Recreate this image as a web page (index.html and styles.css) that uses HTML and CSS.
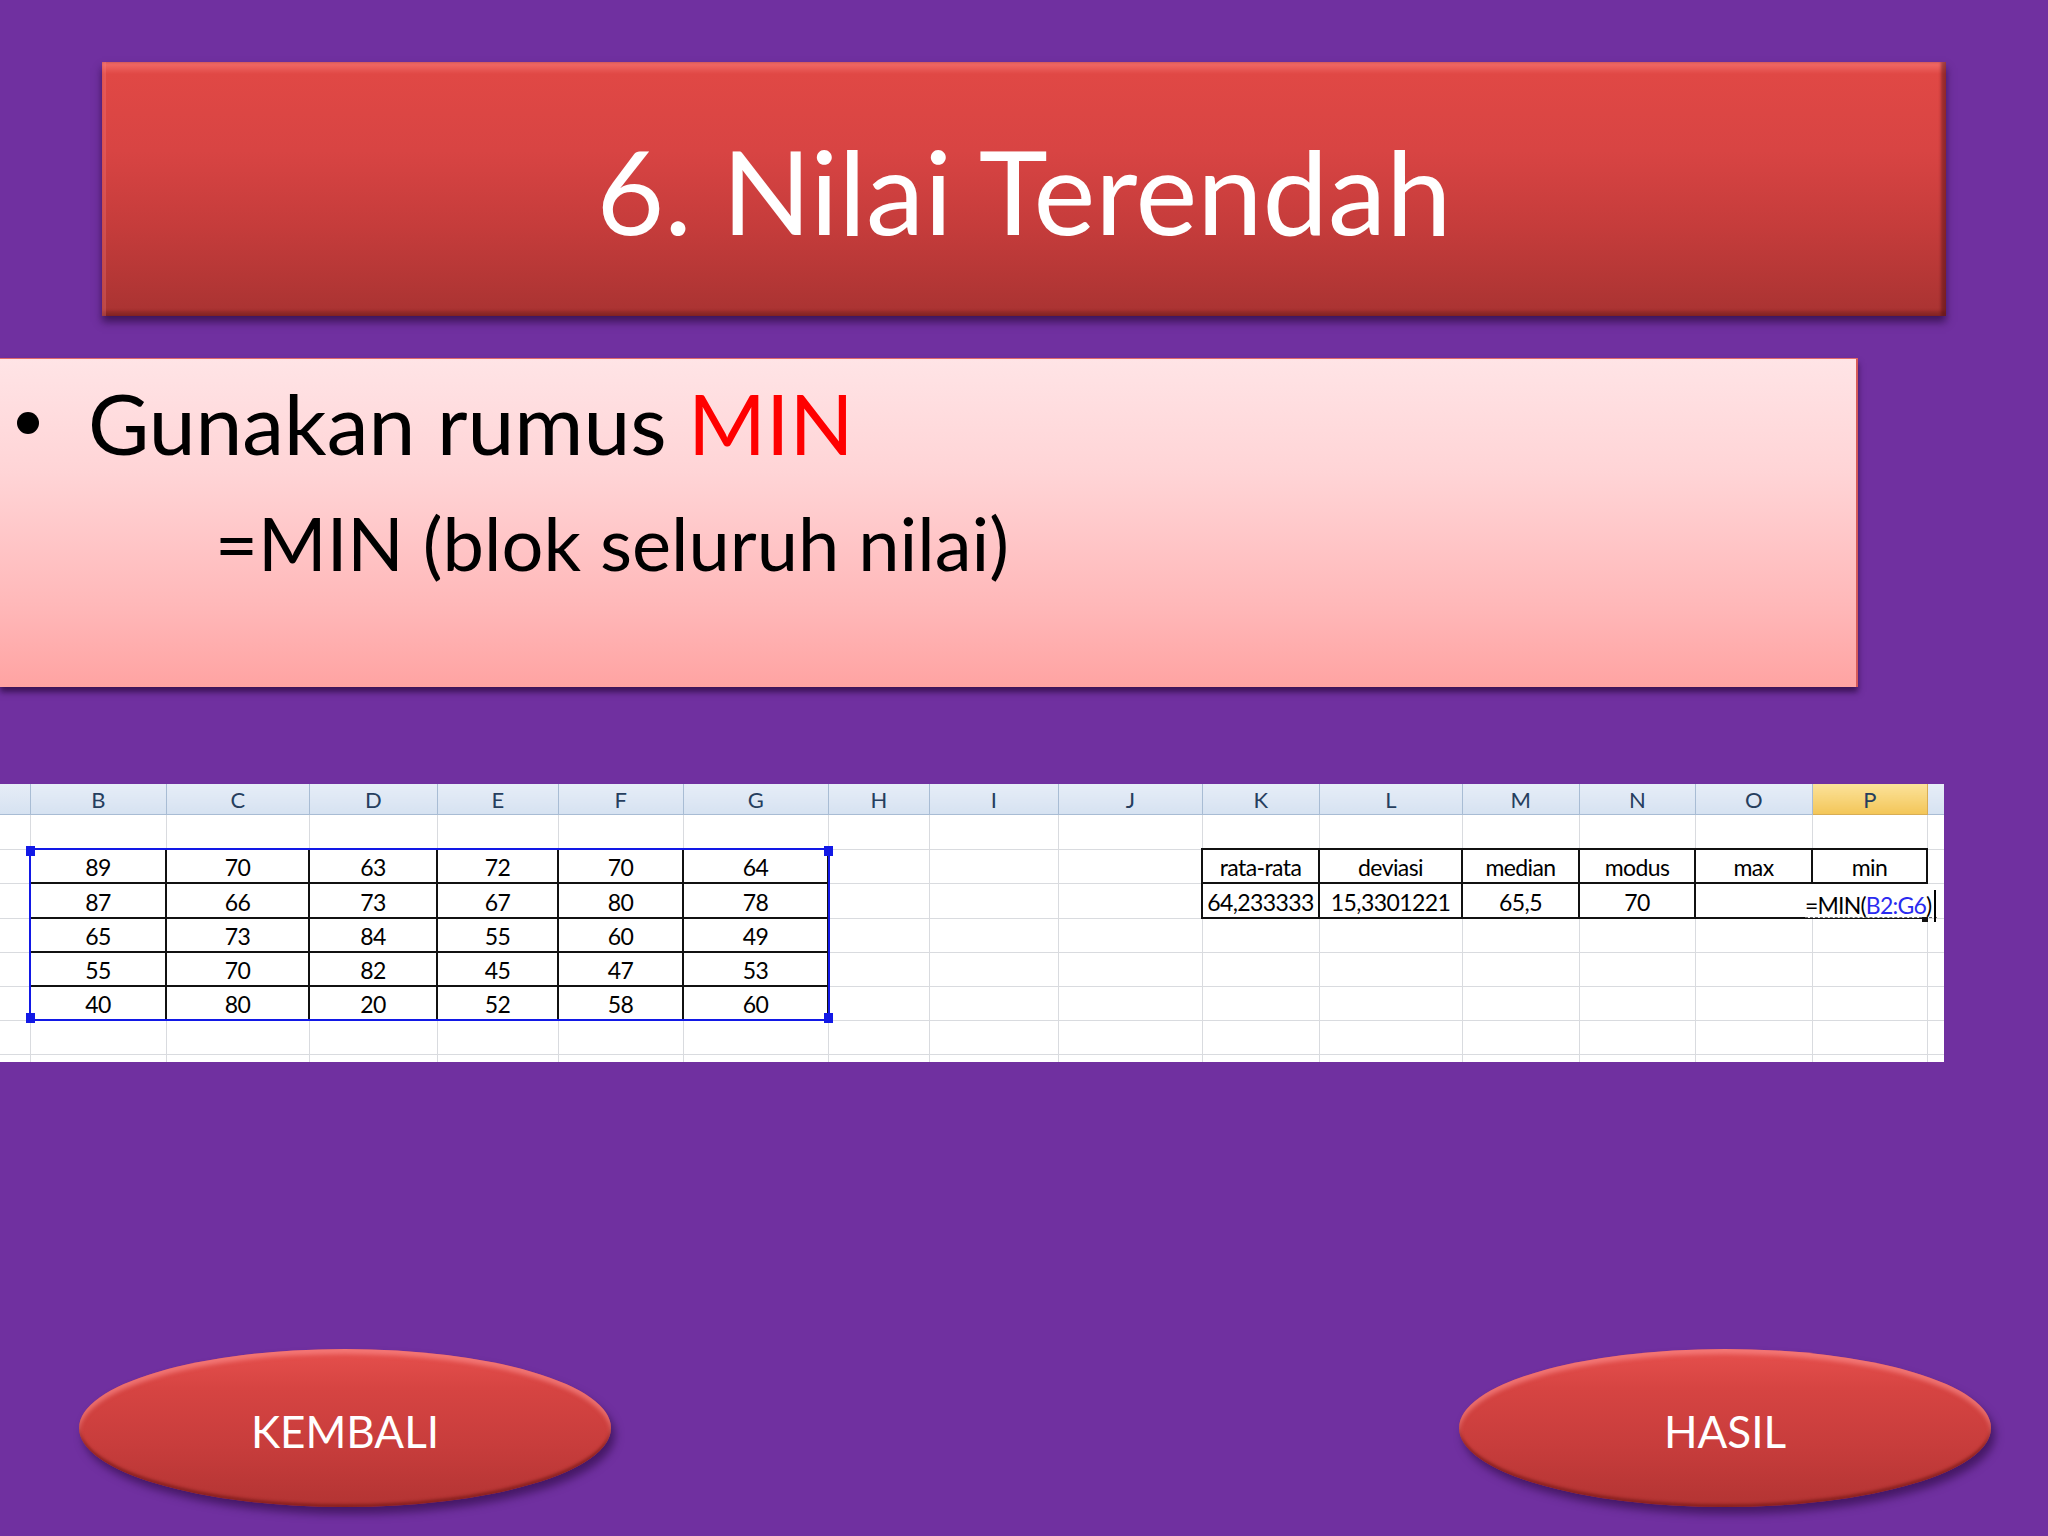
FILE: index.html
```html
<!DOCTYPE html>
<html lang="id">
<head>
<meta charset="utf-8">
<title>6. Nilai Terendah</title>
<link rel="stylesheet" href="styles.css">
</head>
<body>
<div class="slide">
  <header class="title-banner">
    <h1 class="title">6. Nilai Terendah</h1>
  </header>

  <section class="content-box">
    <p class="line1"><span class="bullet"></span>Gunakan rumus <span class="red">MIN</span></p>
    <p class="line2">=MIN (blok seluruh nilai)</p>
  </section>

  <div class="sheet">
    <table class="grid">
      <colgroup>
        <col style="width:30px"><col style="width:136px"><col style="width:143px"><col style="width:128px"><col style="width:121px"><col style="width:125px"><col style="width:145px"><col style="width:101px"><col style="width:129px"><col style="width:144px"><col style="width:117px"><col style="width:143px"><col style="width:117px"><col style="width:116px"><col style="width:117px"><col style="width:115px"><col style="width:17px">
      </colgroup>
      <tr class="hdr">
        <th></th><th>B</th><th>C</th><th>D</th><th>E</th><th>F</th><th>G</th><th>H</th><th>I</th><th>J</th><th>K</th><th>L</th><th>M</th><th>N</th><th>O</th><th class="active">P</th><th></th>
      </tr>
      <tr class="r35">
        <td></td><td></td><td></td><td></td><td></td><td></td><td></td><td></td><td></td><td></td><td></td><td></td><td></td><td></td><td></td><td></td><td></td>
      </tr>
      <tr class="r34">
        <td></td><td class="d">89</td><td class="d">70</td><td class="d">63</td><td class="d">72</td><td class="d">70</td><td class="d">64</td><td></td><td></td><td></td><td class="d">rata-rata</td><td class="d">deviasi</td><td class="d">median</td><td class="d">modus</td><td class="d">max</td><td class="d">min</td><td></td>
      </tr>
      <tr class="r35">
        <td></td><td class="d">87</td><td class="d">66</td><td class="d">73</td><td class="d">67</td><td class="d">80</td><td class="d">78</td><td></td><td></td><td></td><td class="d">64,233333</td><td class="d">15,3301221</td><td class="d">65,5</td><td class="d">70</td><td class="d"></td><td class="d"></td><td></td>
      </tr>
      <tr class="r34">
        <td></td><td class="d">65</td><td class="d">73</td><td class="d">84</td><td class="d">55</td><td class="d">60</td><td class="d">49</td><td></td><td></td><td></td><td></td><td></td><td></td><td></td><td></td><td></td><td></td>
      </tr>
      <tr class="r34">
        <td></td><td class="d">55</td><td class="d">70</td><td class="d">82</td><td class="d">45</td><td class="d">47</td><td class="d">53</td><td></td><td></td><td></td><td></td><td></td><td></td><td></td><td></td><td></td><td></td>
      </tr>
      <tr class="r34">
        <td></td><td class="d">40</td><td class="d">80</td><td class="d">20</td><td class="d">52</td><td class="d">58</td><td class="d">60</td><td></td><td></td><td></td><td></td><td></td><td></td><td></td><td></td><td></td><td></td>
      </tr>
      <tr class="r34">
        <td></td><td></td><td></td><td></td><td></td><td></td><td></td><td></td><td></td><td></td><td></td><td></td><td></td><td></td><td></td><td></td><td></td>
      </tr>
      <tr class="r8">
        <td></td><td></td><td></td><td></td><td></td><td></td><td></td><td></td><td></td><td></td><td></td><td></td><td></td><td></td><td></td><td></td><td></td>
      </tr>
    </table>

    <div class="selection"></div>
    <span class="handle h-tl"></span>
    <span class="handle h-bl"></span>
    <span class="handle h-tr"></span>
    <span class="handle h-br"></span>

    <div class="edit-cell">=MIN(<span class="ref">B2:G6</span>)<span class="caret"></span></div>
    <span class="fill-handle"></span>
  </div>

  <nav class="buttons">
    <div class="oval-btn">KEMBALI</div>
    <div class="oval-btn">HASIL</div>
  </nav>
</div>
</body>
</html>
```

FILE: styles.css
```css
html, body {
  margin: 0;
  padding: 0;
}

body {
  background: #7030a0;
  font-family: Lato, "Open Sans", "Liberation Sans", sans-serif;
}

.slide {
  width: 2048px;
  height: 1536px;
  overflow: hidden;
  display: flex;
  flex-direction: column;
  align-items: flex-start;
}

/* ---------- title banner ---------- */
.title-banner {
  margin: 62px 0 0 102px;
  width: 1844px;
  height: 254px;
  box-sizing: border-box;
  display: flex;
  align-items: center;
  justify-content: center;
  background: linear-gradient(to bottom, #f46e6b 0, #e04845 12px, #d84443 35%, #c53c3b 65%, #a93332 100%);
  box-shadow:
    inset 4px 0 0 rgba(255, 140, 140, 0.25),
    inset -5px 0 3px rgba(70, 10, 20, 0.45),
    inset 0 -5px 3px rgba(90, 20, 20, 0.35),
    0 6px 8px rgba(40, 10, 60, 0.7);
}

.title {
  margin: 0;
  font-weight: 400;
  font-size: 117px;
  line-height: 1;
  color: #ffffff;
  padding-top: 2px;
}

/* ---------- content box ---------- */
.content-box {
  margin-top: 42px;
  width: 1858px;
  height: 329px;
  box-sizing: border-box;
  padding-top: 14px;
  background: linear-gradient(to bottom, #ffe4e6 0%, #ffd4d6 35%, #ffb8b9 75%, #ffa3a2 100%);
  border-top: 1px solid #e06a6a;
  border-right: 2px solid #d65a5a;
  box-shadow: 0 5px 6px rgba(40, 10, 60, 0.75);
}

.content-box p {
  margin: 0;
  color: #000000;
  white-space: nowrap;
}

.line1 {
  position: relative;
  padding-left: 88px;
  font-size: 84px;
  line-height: 100px;
}

.bullet {
  position: absolute;
  left: 17px;
  top: 39px;
  width: 22px;
  height: 22px;
  border-radius: 50%;
  background: #000;
}

.red {
  color: #ff0000;
}

.line2 {
  margin-top: 25px !important;
  padding-left: 215px;
  font-size: 74px;
  line-height: 90px;
}

/* ---------- spreadsheet ---------- */
.sheet {
  position: relative;
  margin-top: 97px;
  width: 1944px;
  height: 278px;
  background: #ffffff;
  overflow: hidden;
}

.grid {
  border-collapse: collapse;
  table-layout: fixed;
  width: 1944px;
  font-family: Lato, "Open Sans", sans-serif;
  font-size: 23px;
  letter-spacing: -0.6px;
  color: #000;
}

.grid th,
.grid td {
  padding: 0;
  text-align: center;
  vertical-align: middle;
  line-height: 1;
  white-space: nowrap;
  overflow: hidden;
  border: 1px solid #d9dbdf;
}

.grid tr:first-child th {
  border-top: none;
}

.grid td:first-child,
.grid th:first-child {
  border-left: none;
}

.hdr {
  height: 30px;
}

.hdr th {
  font-weight: 400;
  font-size: 22px;
  color: #263e5e;
  background: linear-gradient(to bottom, #e6edf7, #d6e2f1);
  border: 1px solid #a8bcd4;
  padding-top: 2px;
}

.hdr th.active {
  background: linear-gradient(to bottom, #fbe29a, #f3c659);
  border-color: #d8ad55;
}

.r35 { height: 35px; }
.r34 { height: 34px; }
.r8 { height: 8px; }

.grid td.d {
  border: 2px solid #111;
  padding-top: 3px;
}

/* selection outline & handles */
.selection {
  position: absolute;
  left: 29px;
  top: 64px;
  width: 801px;
  height: 173px;
  box-sizing: border-box;
  border: 2px solid #1219e6;
}

.handle {
  position: absolute;
  width: 9px;
  height: 10px;
  background: #1219e6;
}

.h-tl { left: 26px; top: 62px; }
.h-bl { left: 26px; top: 229px; }
.h-tr { left: 824px; top: 62px; }
.h-br { left: 824px; top: 229px; }

/* cell in edit mode */
.edit-cell {
  position: absolute;
  left: 1805px;
  top: 100px;
  height: 34px;
  box-sizing: border-box;
  padding-top: 6px;
  padding-right: 1px;
  background: #ffffff;
  font-family: Lato, "Open Sans", sans-serif;
  font-size: 23px;
  letter-spacing: -0.8px;
  line-height: 1;
  color: #000;
  white-space: nowrap;
  border-bottom: 1px dashed #666;
}

.ref {
  color: #2a2af0;
}

.caret {
  display: inline-block;
  width: 2px;
  height: 32px;
  margin-left: 3px;
  vertical-align: -8px;
  background: #000;
}

.fill-handle {
  position: absolute;
  left: 1922px;
  top: 133px;
  width: 6px;
  height: 5px;
  background: #111;
}

/* ---------- buttons ---------- */
.buttons {
  margin-top: 287px;
  width: 2048px;
  box-sizing: border-box;
  padding: 0 57px 0 79px;
  display: flex;
  justify-content: space-between;
}

.oval-btn {
  width: 532px;
  height: 158px;
  border-radius: 50%;
  display: flex;
  align-items: center;
  justify-content: center;
  padding-top: 6px;
  box-sizing: border-box;
  font-size: 44px;
  color: #ffffff;
  background: linear-gradient(to bottom, #e6504d 0%, #d64442 25%, #c83d3c 60%, #b33433 100%);
  box-shadow:
    inset 0 5px 4px rgba(255, 150, 150, 0.55),
    inset 0 -3px 3px rgba(110, 20, 20, 0.6),
    4px 7px 9px rgba(35, 5, 55, 0.55);
}
```
